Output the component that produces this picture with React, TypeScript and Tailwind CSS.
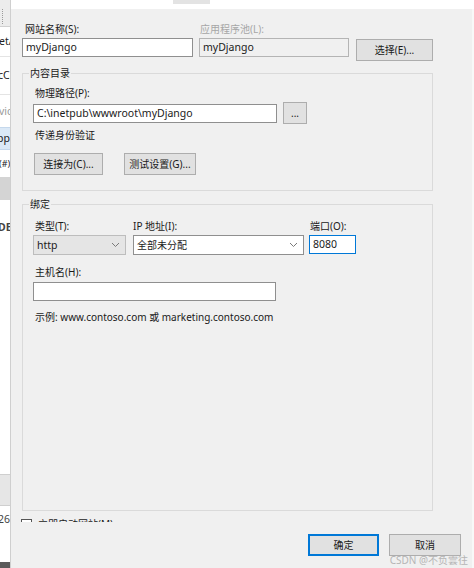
import React from "react";

const Chevron = () => (
  <svg width="9" height="6" viewBox="0 0 9 6" className="shrink-0">
    <polyline points="1,1 4.5,4.5 8,1" fill="none" stroke="#7a7a7a" strokeWidth="1" />
  </svg>
);

const Btn = ({ label, w, primary }: { label: string; w: string; primary?: boolean }) => (
  <div
    className={`${w} h-[22px] flex items-center justify-center bg-[#e1e1e1] border ${
      primary ? "border-[#0078d7] border-2" : "border-[#adadad]"
    } text-[10px] leading-none text-[#1a1a1a]`}
  >
    {label}
  </div>
);

const Field = ({ value, w, disabled, focus }: { value: string; w: string; disabled?: boolean; focus?: boolean }) => (
  <div
    className={`${w} h-[19px] flex items-center px-[3px] border ${
      focus ? "border-[#0078d7]" : "border-[#8f8f8f]"
    } ${disabled ? "bg-[#f0f0f0] border-[#b4b4b4]" : "bg-white"} text-[10.5px] leading-none text-[#1a1a1a] whitespace-nowrap overflow-hidden`}
  >
    {value}
  </div>
);

const Label = ({ text, gray, pl }: { text: string; gray?: boolean; pl?: string }) => (
  <div className={`h-[12px] leading-[12px] text-[10px] whitespace-nowrap ${pl ?? ""} ${gray ? "text-[#a6a6a6]" : "text-[#1a1a1a]"}`}>
    {text}
  </div>
);

// background window peeking out on the left edge
const LeftStrip = () => (
  <div className="w-[11px] h-full shrink-0 flex flex-col overflow-hidden bg-white text-[10.5px] leading-none text-[#222] whitespace-nowrap border-r border-[#cfcfcf]">
    <div className="h-[27px] bg-[#ececec] border-b border-[#d0d0d0] flex pl-[2px] pt-[9px]">
      <div className="w-[1px] h-[15px] border-l border-dotted border-[#9a9a9a]" />
    </div>
    <div className="h-[30px] flex items-center -ml-[1px] border-b border-[#e4e4e4]">et/</div>
    <div className="h-[38px] flex items-center -ml-[2px] border-b border-[#e4e4e4]">cCo</div>
    <div className="h-[32px] flex items-center -ml-[1px] text-[#9a9a9a]">vic</div>
    <div className="h-[23px] flex items-center -ml-[3px] bg-[#dbe9f7] border-y border-[#c5d8ec]">pp</div>
    <div className="h-[27px] flex items-center -ml-[1px] text-[9px]">(#)</div>
    <div className="h-[23px] bg-[#d4d4d4]" />
    <div className="h-[55px] flex items-center -ml-[2px] font-bold text-[#444]">DE</div>
    <div className="flex-1" />
    <div className="h-[32px] bg-[#e6e6e6] border-y border-[#cfcfcf]" />
    <div className="h-[26px] flex items-center -ml-[2px] text-[#444]">26</div>
    <div className="h-[30px]" />
    <div className="h-[6px] bg-[#5a5a5a]" />
  </div>
);

export default function App() {
  return (
    <div className="relative flex w-[474px] h-[568px] overflow-hidden bg-white [font-family:'Noto_Sans','Noto_Sans_CJK_SC',sans-serif]">
      <LeftStrip />
      <div className="flex-1 flex flex-col">
        {/* title bar remnant */}
        <div className="h-[9px] bg-white flex shrink-0">
          <div className="ml-[162px] w-[37px] h-[4px] bg-[#e3e3e3]" />
        </div>
        <div className="flex flex-1">
          <div className="flex-1 bg-[#f0f0f0] pl-[11px] pr-[11px] pt-[14px] flex flex-col">
            {/* site name / app pool */}
            <div className="flex">
              <div className="w-[177px]">
                <Label text="网站名称(S):" pl="pl-[3px]" />
              </div>
              <Label text="应用程序池(L):" gray pl="pl-[1px]" />
            </div>
            <div className="flex mt-[3px] items-start">
              <Field value="myDjango" w="w-[171px]" />
              <div className="ml-[6px]">
                <Field value="myDjango" w="w-[150px]" disabled />
              </div>
              <div className="ml-[7px] mt-[1px]">
                <Btn label="选择(E)..." w="w-[77px]" />
              </div>
            </div>

            {/* content directory */}
            <fieldset className="mt-[6px] w-[411px] border border-[#dadada] pl-[10px] pb-[15px]">
              <legend className="ml-[-4px] px-[1px] text-[10px] leading-[12px] text-[#1a1a1a]">内容目录</legend>
              <div className="mt-[8px]">
                <Label text="物理路径(P):" pl="pl-[2px]" />
              </div>
              <div className="flex items-center h-[22px] mt-[3px]">
                <Field value="C:\inetpub\wwwroot\myDjango" w="w-[244px]" />
                <div className="ml-[6px]">
                  <Btn label="..." w="w-[24px]" />
                </div>
              </div>
              <div className="mt-[5px]">
                <Label text="传递身份验证" pl="pl-[2px]" />
              </div>
              <div className="flex mt-[12px] ml-[1px] gap-[21px]">
                <Btn label="连接为(C)..." w="w-[69px]" />
                <Btn label="测试设置(G)..." w="w-[72px]" />
              </div>
            </fieldset>

            {/* binding */}
            <fieldset className="mt-[7px] w-[411px] h-[313px] border border-[#dadada] pl-[10px]">
              <legend className="ml-[-4px] px-[1px] text-[10px] leading-[12px] text-[#1a1a1a]">绑定</legend>
              <div className="flex mt-[10px]">
                <div className="w-[93px] flex flex-col">
                  <Label text="类型(T):" pl="pl-[2px]" />
                  <div className="mt-[3px] h-[20px] bg-[#e5e5e5] border border-[#bdbdbd] flex items-center justify-between pl-[3px] pr-[5px] text-[10.5px] leading-none text-[#1a1a1a]">
                    http
                    <Chevron />
                  </div>
                </div>
                <div className="ml-[7px] w-[171px] flex flex-col">
                  <Label text="IP 地址(I):" />
                  <div className="mt-[3px] h-[20px] bg-white border border-[#8f8f8f] flex items-center justify-between pl-[3px] pr-[5px] text-[10px] leading-none text-[#1a1a1a]">
                    全部未分配
                    <Chevron />
                  </div>
                </div>
                <div className="ml-[5px] flex flex-col">
                  <Label text="端口(O):" pl="pl-[1px]" />
                  <div className="mt-[3px]">
                    <Field value="8080" w="w-[47px]" focus />
                  </div>
                </div>
              </div>
              <div className="mt-[11px]">
                <Label text="主机名(H):" pl="pl-[2px]" />
              </div>
              <div className="mt-[4px]">
                <Field value="" w="w-[243px]" />
              </div>
              <div className="mt-[10px]">
                <Label text="示例: www.contoso.com 或 marketing.contoso.com" pl="pl-[2px]" />
              </div>
            </fieldset>

            {/* start immediately checkbox, cut off */}
            <div className="mt-[8px] h-[3px] overflow-hidden flex items-start -ml-[1px]">
              <div className="w-[11px] h-[11px] border border-[#555] bg-white" />
              <span className="ml-[6px] text-[10px] leading-none text-[#1a1a1a]">立即启动网站(M)</span>
            </div>

            <div className="flex justify-end gap-[10px] mt-[12px]">
              <Btn label="确定" w="w-[71px]" primary />
              <Btn label="取消" w="w-[72px]" />
            </div>
          </div>
          <div className="w-[2px] bg-[#f8f8f8]" />
        </div>
      </div>
      <div className="absolute right-[6px] bottom-[3px] text-[10px] leading-none text-[#b5b5b5] whitespace-nowrap">
        CSDN @不负雲往
      </div>
    </div>
  );
}
